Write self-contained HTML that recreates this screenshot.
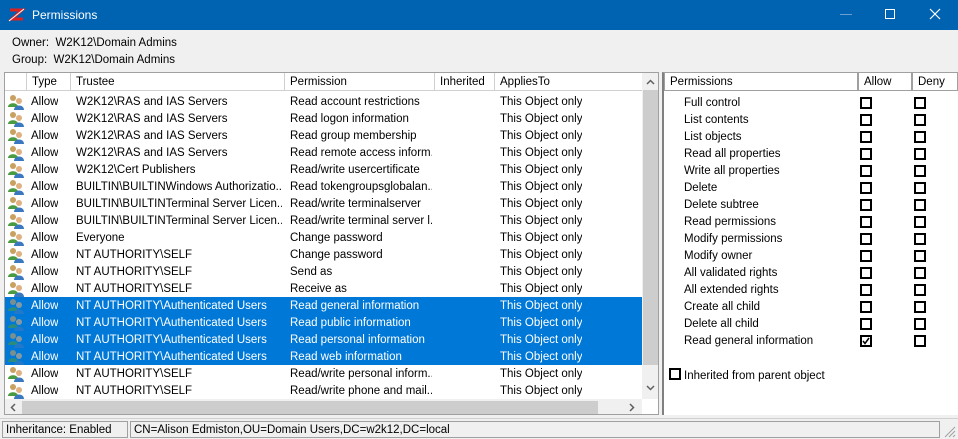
<!DOCTYPE html>
<html><head><meta charset="utf-8"><style>
*{margin:0;padding:0;box-sizing:border-box}
body{width:958px;height:439px;overflow:hidden;background:#f0f0f0;font-family:"Liberation Sans",sans-serif;font-size:11.5px;color:#000;position:relative}
.abs{position:absolute}
#title{left:0;top:0;width:958px;height:30px;background:#0063b1;color:#fff}
#title .t{left:32px;top:8px;font-size:12px}
.lbl{font-size:11.5px;white-space:nowrap}
#list{left:4px;top:72px;width:655px;height:343px;border:1px solid #a0a0a0;background:#fff;overflow:hidden}
.hdr{top:0;height:18px;border-right:1px solid #d0d0d0;border-bottom:1px solid #d0d0d0;background:#fff;padding-left:5px;line-height:19px}
.row{left:0;width:637px;height:17px;line-height:18px;white-space:nowrap}
.row span{position:absolute;top:0;overflow:hidden}
.sel{background:#0078d7;color:#fff}
#vs{left:637px;top:0;width:17px;height:326px;background:#f0f0f0}
#hs{left:0;top:326px;width:637px;height:17px;background:#f0f0f0}
#right{left:662px;top:72px;width:296px;height:343px;border-left:2px solid #808080;border-top:1px solid #a0a0a0;background:#fff;font-size:11.5px}
.rh{top:0;height:18px;border:1px solid #a0a0a0;border-top:none;line-height:19px;padding-left:5px;background:#fff}
.cb{position:absolute;width:12px;height:12px;border:2px solid #000;background:#fff}
.rr{position:absolute;left:20px;height:17px;line-height:18px;white-space:nowrap}
#status{left:0;top:418px;width:958px;height:21px;border-top:1px solid #d0d0d0}
.sp{top:2px;height:17px;border:1px solid #a0a0a0;line-height:16px;padding-left:3px;font-size:11.5px}
</style></head><body>
<div id="title" class="abs">
<svg class="abs" style="left:8px;top:7px" width="18" height="16" viewBox="0 0 18 16"><path d="M2 3h12l-10 9h11" stroke="#e02020" stroke-width="3" fill="none"/><path d="M1 14l15-12" stroke="#fff" stroke-width="1"/></svg>
<div class="abs t">Permissions</div>
<div class="abs" style="left:840px;top:14px;width:12px;height:1px;background:#6a9fd0"></div>
<div class="abs" style="left:885px;top:9px;width:10px;height:10px;border:1px solid #fff"></div>
<svg class="abs" style="left:929px;top:8px" width="12" height="12"><path d="M1 1L11 11M11 1L1 11" stroke="#fff" stroke-width="1.2"/></svg>
</div>
<div class="abs lbl" style="left:12px;top:37px">Owner:&nbsp; W2K12\Domain Admins</div>
<div class="abs lbl" style="left:12px;top:54px">Group:&nbsp; W2K12\Domain Admins</div>

<div id="list" class="abs">
<div class="abs hdr" style="left:0;width:22px"></div>
<div class="abs hdr" style="left:22px;width:44px">Type</div>
<div class="abs hdr" style="left:66px;width:214px">Trustee</div>
<div class="abs hdr" style="left:280px;width:150px">Permission</div>
<div class="abs hdr" style="left:430px;width:60px">Inherited</div>
<div class="abs hdr" style="left:490px;width:147px;border-right:none">AppliesTo</div>
<div id="rows"></div>
<div id="vs" class="abs"><div class="abs" style="left:1px;top:17px;width:15px;height:275px;background:#cdcdcd"></div><svg class="abs" style="left:4px;top:6px" width="9" height="6"><path d="M1 5l3.5-3.5L8 5" stroke="#606060" stroke-width="1.5" fill="none"/></svg><svg class="abs" style="left:4px;top:312px" width="9" height="6"><path d="M1 1l3.5 3.5L8 1" stroke="#606060" stroke-width="1.5" fill="none"/></svg></div>
<div id="hs" class="abs"><div class="abs" style="left:17px;top:2px;width:576px;height:13px;background:#cdcdcd"></div><svg class="abs" style="left:5px;top:4px" width="6" height="9"><path d="M5 1L1.5 4.5L5 8" stroke="#606060" stroke-width="1.5" fill="none"/></svg><svg class="abs" style="left:624px;top:4px" width="6" height="9"><path d="M1 1l3.5 3.5L1 8" stroke="#606060" stroke-width="1.5" fill="none"/></svg></div>
</div>

<div id="right" class="abs">
<div class="abs rh" style="left:0;width:194px">Permissions</div>
<div class="abs rh" style="left:194px;width:54px">Allow</div>
<div class="abs rh" style="left:248px;width:46px">Deny</div>
<div id="rrows"></div>
<div class="cb" style="left:5px;top:295px"></div>
<div class="rr" style="left:20px;top:294px">Inherited from parent object</div>
</div>

<div id="status" class="abs">
<div class="abs sp" style="left:2px;width:126px">Inheritance: Enabled</div>
<div class="abs sp" style="left:130px;width:810px">CN=Alison Edmiston,OU=Domain Users,DC=w2k12,DC=local</div>
<svg class="abs" style="left:944px;top:7px" width="12" height="12"><path d="M11 1L1 11M11 5L5 11M11 9L9 11" stroke="#a0a0a0"/></svg>
</div>
<script>
var R=[["W2K12\\RAS and IAS Servers","Read account restrictions"],["W2K12\\RAS and IAS Servers","Read logon information"],["W2K12\\RAS and IAS Servers","Read group membership"],["W2K12\\RAS and IAS Servers","Read remote access inform..."],["W2K12\\Cert Publishers","Read/write usercertificate"],["BUILTIN\\BUILTINWindows Authorizatio...","Read tokengroupsglobalan..."],["BUILTIN\\BUILTINTerminal Server Licen...","Read/write terminalserver"],["BUILTIN\\BUILTINTerminal Server Licen...","Read/write terminal server l..."],["Everyone","Change password"],["NT AUTHORITY\\SELF","Change password"],["NT AUTHORITY\\SELF","Send as"],["NT AUTHORITY\\SELF","Receive as"],["NT AUTHORITY\\Authenticated Users","Read general information"],["NT AUTHORITY\\Authenticated Users","Read public information"],["NT AUTHORITY\\Authenticated Users","Read personal information"],["NT AUTHORITY\\Authenticated Users","Read web information"],["NT AUTHORITY\\SELF","Read/write personal inform..."],["NT AUTHORITY\\SELF","Read/write phone and mail..."],["NT AUTHORITY\\SELF","Read/write ..."]];
var icon='<svg width="18" height="16" viewBox="0 0 18 16"><circle cx="6" cy="4" r="3" fill="#c8a060"/><path d="M1 13c0-5 10-5 10 0z" fill="#4a9a40"/><circle cx="12" cy="7" r="3" fill="#e0b080"/><path d="M7 16c0-6 10-6 10 0z" fill="#3a78c0"/></svg>';
var h='';R.forEach(function(r,i){var s=i>=12&&i<=15;h+='<div class="abs row'+(s?' sel':'')+'" style="top:'+(20+i*17)+'px"><span style="left:2px;top:1px;'+(s?'opacity:.6':'')+'">'+icon+'</span><span style="left:26px">Allow</span><span style="left:71px;width:206px">'+r[0]+'</span><span style="left:285px;width:142px">'+r[1]+'</span><span style="left:495px">This Object only</span></div>';});
document.getElementById('rows').innerHTML=h;
var P=["Full control","List contents","List objects","Read all properties","Write all properties","Delete","Delete subtree","Read permissions","Modify permissions","Modify owner","All validated rights","All extended rights","Create all child","Delete all child","Read general information"];
var g='';P.forEach(function(p,i){var t=21+i*17;g+='<div class="rr" style="top:'+t+'px">'+p+'</div><div class="cb" style="left:196px;top:'+(t+3)+'px">'+(i==14?'<svg width="8" height="8" style="position:absolute;left:0;top:0"><path d="M1 4l2 2.5L7 1" stroke="#000" stroke-width="1.5" fill="none"/></svg>':'')+'</div><div class="cb" style="left:250px;top:'+(t+3)+'px"></div>';});
document.getElementById('rrows').innerHTML=g;
</script>
</body></html>
